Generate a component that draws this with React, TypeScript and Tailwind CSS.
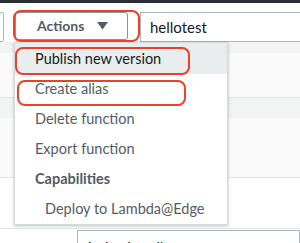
import React from "react";

const font = { fontFamily: 'Lato, "Liberation Sans", sans-serif' };

export default function App() {
  return (
    <div className="relative w-[300px] h-[243px] overflow-hidden bg-white" style={font}>
      <div className="h-[3px] bg-[#2a2f36]" />
      <div className="h-[39px] bg-white flex items-start pt-[9px]">
        <div className="w-[4px] h-[30px] border border-l-0 border-[#aab7b8] rounded-r-[2px] shrink-0" />
        <div className="ml-[11px] w-[113px] h-[28px] border border-[#879596] rounded-[3px] flex items-center shrink-0 bg-white">
          <span className="ml-[21px] text-[14px] font-bold text-[#545b64] leading-none">Actions</span>
          <svg className="ml-[13px]" width="11" height="8" viewBox="0 0 11 8">
            <path d="M0 0 L11 0 L5.5 7.5 Z" fill="#545b64" />
          </svg>
        </div>
        <div className="ml-[12px] flex-1 h-[30px] border border-r-0 border-[#aab7b8] flex items-center pl-[9px]">
          <span className="text-[15px] text-[#16191f] leading-none">hellotest</span>
        </div>
      </div>
      <div className="h-[11px] bg-[#f2f3f3]" />
      <div className="h-[45px] bg-[#fafafa] border-b border-[#e4e7e7]" />
      <div className="h-[20px] bg-[#f2f3f3]" />
      <div className="h-[60px] bg-[#fafafa] border-b border-[#e4e7e7]" />
      <div className="h-[51px] bg-white border-b border-[#e4e7e7]" />
      <div className="pl-[77px] pt-[1px]">
        <div className="h-[30px] border border-[#aab7b8] pl-[10px] pt-[9px] text-[15px] text-[#16191f] leading-none">index.handler</div>
      </div>

      {/* dropdown menu */}
      <div className="absolute left-[14px] top-[42px] w-[214px] h-[183px] bg-white border border-[#d5dbdb] shadow-[0_1px_3px_rgba(0,0,0,0.25)] flex flex-col">
        <div className="h-[31px] bg-[#eaeded] flex items-center pl-[20px] text-[14.5px] text-[#16191f]">Publish new version</div>
        <div className="h-[30px] flex items-center pl-[20px] text-[14.5px] text-[#545b64]">Create alias</div>
        <div className="h-[30px] flex items-center pl-[20px] text-[14.5px] text-[#545b64]">Delete function</div>
        <div className="h-[30px] flex items-center pl-[20px] text-[14.5px] text-[#545b64]">Export function</div>
        <div className="h-[30px] flex items-center pl-[20px] text-[14.5px] font-bold text-[#545b64]">Capabilities</div>
        <div className="h-[30px] flex items-center pl-[30px] text-[14.5px] text-[#545b64]">Deploy to Lambda@Edge</div>
      </div>

      {/* red annotations */}
      <div className="absolute left-[13px] top-[10px] w-[127px] h-[32px] border-2 border-[#e8412c] rounded-[8px]" />
      <div className="absolute left-[15px] top-[47px] w-[175px] h-[28px] border-2 border-[#e8412c] rounded-[8px]" />
      <div className="absolute left-[17px] top-[80px] w-[169px] h-[26px] border-2 border-[#e8412c] rounded-[8px]" />
    </div>
  );
}
